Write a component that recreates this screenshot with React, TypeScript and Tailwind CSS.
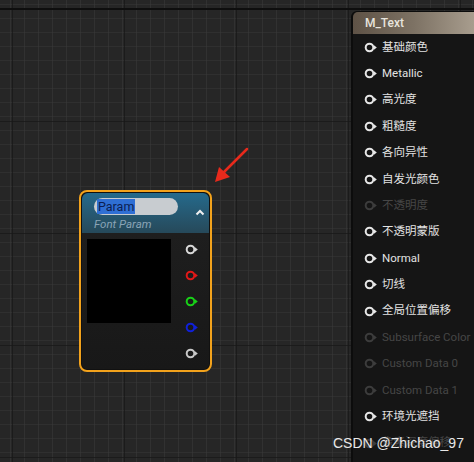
import React from "react";

const FONT = "font-['Roboto','Noto_Sans','Noto_Sans_CJK_SC',sans-serif]";

type Row = { label: string; off?: boolean };

const ROWS: Row[] = [
  { label: "基础颜色" },
  { label: "Metallic" },
  { label: "高光度" },
  { label: "粗糙度" },
  { label: "各向异性" },
  { label: "自发光颜色" },
  { label: "不透明度", off: true },
  { label: "不透明蒙版" },
  { label: "Normal" },
  { label: "切线" },
  { label: "全局位置偏移" },
  { label: "Subsurface Color", off: true },
  { label: "Custom Data 0", off: true },
  { label: "Custom Data 1", off: true },
  { label: "环境光遮挡" },
  { label: "像素深度偏移", off: true },
];

function Pin({ color }: { color: string }) {
  return (
    <svg width="14" height="11" viewBox="0 0 14 11" className="shrink-0">
      <circle cx="5.5" cy="5.5" r="3.8" fill="none" stroke={color} strokeWidth="2" />
      <polygon points="10,3.2 12.8,5.5 10,7.8" fill={color} />
    </svg>
  );
}

function Grid() {
  return (
    <svg className="absolute inset-0" width="474" height="462">
      <defs>
        <pattern id="minor" x="12" y="9" width="14" height="14" patternUnits="userSpaceOnUse">
          <path d="M0 0H14M0 0V14" stroke="#383838" strokeWidth="1.2" fill="none" />
        </pattern>
        <pattern id="major" x="12" y="9" width="112" height="112" patternUnits="userSpaceOnUse">
          <rect width="112" height="112" fill="url(#minor)" />
          <path d="M0 0H112M0 0V112" stroke="#171717" strokeWidth="1.5" fill="none" />
        </pattern>
      </defs>
      <rect width="474" height="462" fill="#262626" />
      <rect width="474" height="462" fill="url(#major)" />
      <line x1="0" y1="9" x2="474" y2="9" stroke="#0e0e0e" strokeWidth="2" />
    </svg>
  );
}

function ParamNode() {
  return (
    <div className="absolute left-[79px] top-[190px] w-[133px] h-[182px] rounded-[8px] border-2 border-[#f2a21c] bg-[#111] p-[1px]">
      <div className="flex h-full flex-col overflow-hidden rounded-[6px] bg-[#1c1c1c]">
        <div className="relative h-[40px] bg-gradient-to-b from-[#246a8c] to-[#26495a] pl-[12px] pt-[5px]">
          <div className="flex h-[17px] w-[84px] items-center rounded-full bg-[#c8ccd0] pl-[3px]">
            <span className="bg-[#2f6fd4] px-[1px] text-[12.5px] leading-[15px] text-[#0c1e52]">Param</span>
          </div>
          <div className="mt-[2px] text-[11.5px] italic leading-[14px] text-[#8aa4b6]">Font Param</div>
          <svg className="absolute left-[113px] top-[16px]" width="10" height="7" viewBox="0 0 10 7">
            <polyline points="1.5,5.5 5,2 8.5,5.5" fill="none" stroke="#f0f0f0" strokeWidth="2" />
          </svg>
        </div>
        <div className="flex flex-1 bg-gradient-to-b from-[#1e1e1e] to-[#181818] pl-[5px] pt-[6px]">
          <div className="h-[84px] w-[84px] bg-black" />
          <div className="ml-[14px] flex flex-col gap-[15px] pt-[5px]">
            <Pin color="#d8d8d8" />
            <Pin color="#e01818" />
            <Pin color="#18d018" />
            <Pin color="#1020d8" />
            <Pin color="#c8c8c8" />
          </div>
        </div>
      </div>
    </div>
  );
}

function MaterialNode() {
  return (
    <div className="absolute left-[351px] top-[11px] right-0 bottom-0 border-l-2 border-t border-[#0c0c0c] rounded-tl-[6px] bg-[#151515]">
      <div className="flex h-[22px] items-center rounded-tl-[5px] bg-gradient-to-r from-[#5e5246] via-[#7d7264] to-[#a89d8e] pl-[12px] text-[12px] font-medium text-[#e8e4de]">
        M_Text
      </div>
      <div className="flex flex-col">
        {ROWS.map((r) => (
          <div key={r.label} className="flex h-[26.4px] items-center gap-[4px] pl-[11px]">
            <Pin color={r.off ? "#3c3c3c" : "#e6e6e6"} />
            <span className={`whitespace-nowrap text-[11.5px] ${r.off ? "text-[#464646]" : "text-[#e2e2e2]"}`}>
              {r.label}
            </span>
          </div>
        ))}
      </div>
    </div>
  );
}

export default function App() {
  return (
    <div className={`relative h-[462px] w-[474px] overflow-hidden bg-[#262626] ${FONT}`}>
      <Grid />
      <ParamNode />
      <MaterialNode />
      {/* red arrow pointing at the param node */}
      <svg className="absolute left-[205px] top-[140px]" width="50" height="50" viewBox="0 0 50 50">
        <line x1="42" y1="9" x2="18" y2="33" stroke="#e82a1c" strokeWidth="2.5" strokeLinecap="round" />
        <polygon points="10,42 14,27 25,37" fill="#e82a1c" />
      </svg>
      <div className="absolute left-[333px] top-[433px] font-['Liberation_Sans',sans-serif] text-[14px] text-white/90">
        CSDN @Zhichao_97
      </div>
    </div>
  );
}
